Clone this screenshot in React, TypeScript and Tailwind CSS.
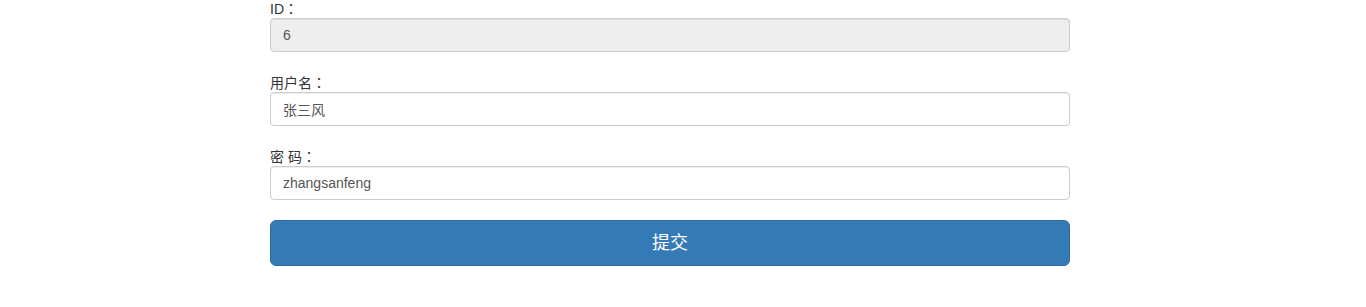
export default function App() {
  const font = { fontFamily: '"Liberation Sans", "Noto Sans CJK SC", sans-serif' };
  const inputBase =
    "block w-full h-[34px] px-[12px] py-[6px] text-[14px] leading-[20px] text-[#555] border border-[#ccc] rounded-[4px] shadow-[inset_0_1px_1px_rgba(0,0,0,0.075)] outline-none";
  const labelCls =
    "block h-[25px] pt-[7px] text-[14px] leading-[16px] text-[#333] [text-spacing-trim:space-all]";
  const Colon = () => (
    <span className="inline-block leading-[16px] [font-family:'Noto_Sans_CJK_TC',sans-serif] [text-spacing-trim:space-all]">：</span>
  );
  return (
    <div className="w-full h-[307px] bg-white overflow-hidden" style={font}>
      <div className="w-[800px] ml-[270px] mt-[-7px]">
        <div className="mb-[15px]">
          <label className={labelCls}>
            ID<Colon />
          </label>
          <input className={inputBase + " bg-[#eee]"} value="6" disabled readOnly style={font} />
        </div>
        <div className="mb-[15px]">
          <label className={labelCls}>
            用户名<Colon />
          </label>
          <input className={inputBase + " bg-white"} value="张三风" readOnly style={font} />
        </div>
        <div className="mb-[15px]">
          <label className={labelCls}>
            密 码<Colon />
          </label>
          <input className={inputBase + " bg-white"} value="zhangsanfeng" readOnly style={font} />
        </div>
        <button
          className="block w-full h-[46px] mt-[20px] bg-[#337ab7] border border-[#2e6da4] rounded-[6px] text-white text-[18px] leading-[24px]"
          style={font}
        >
          提交
        </button>
      </div>
    </div>
  );
}
